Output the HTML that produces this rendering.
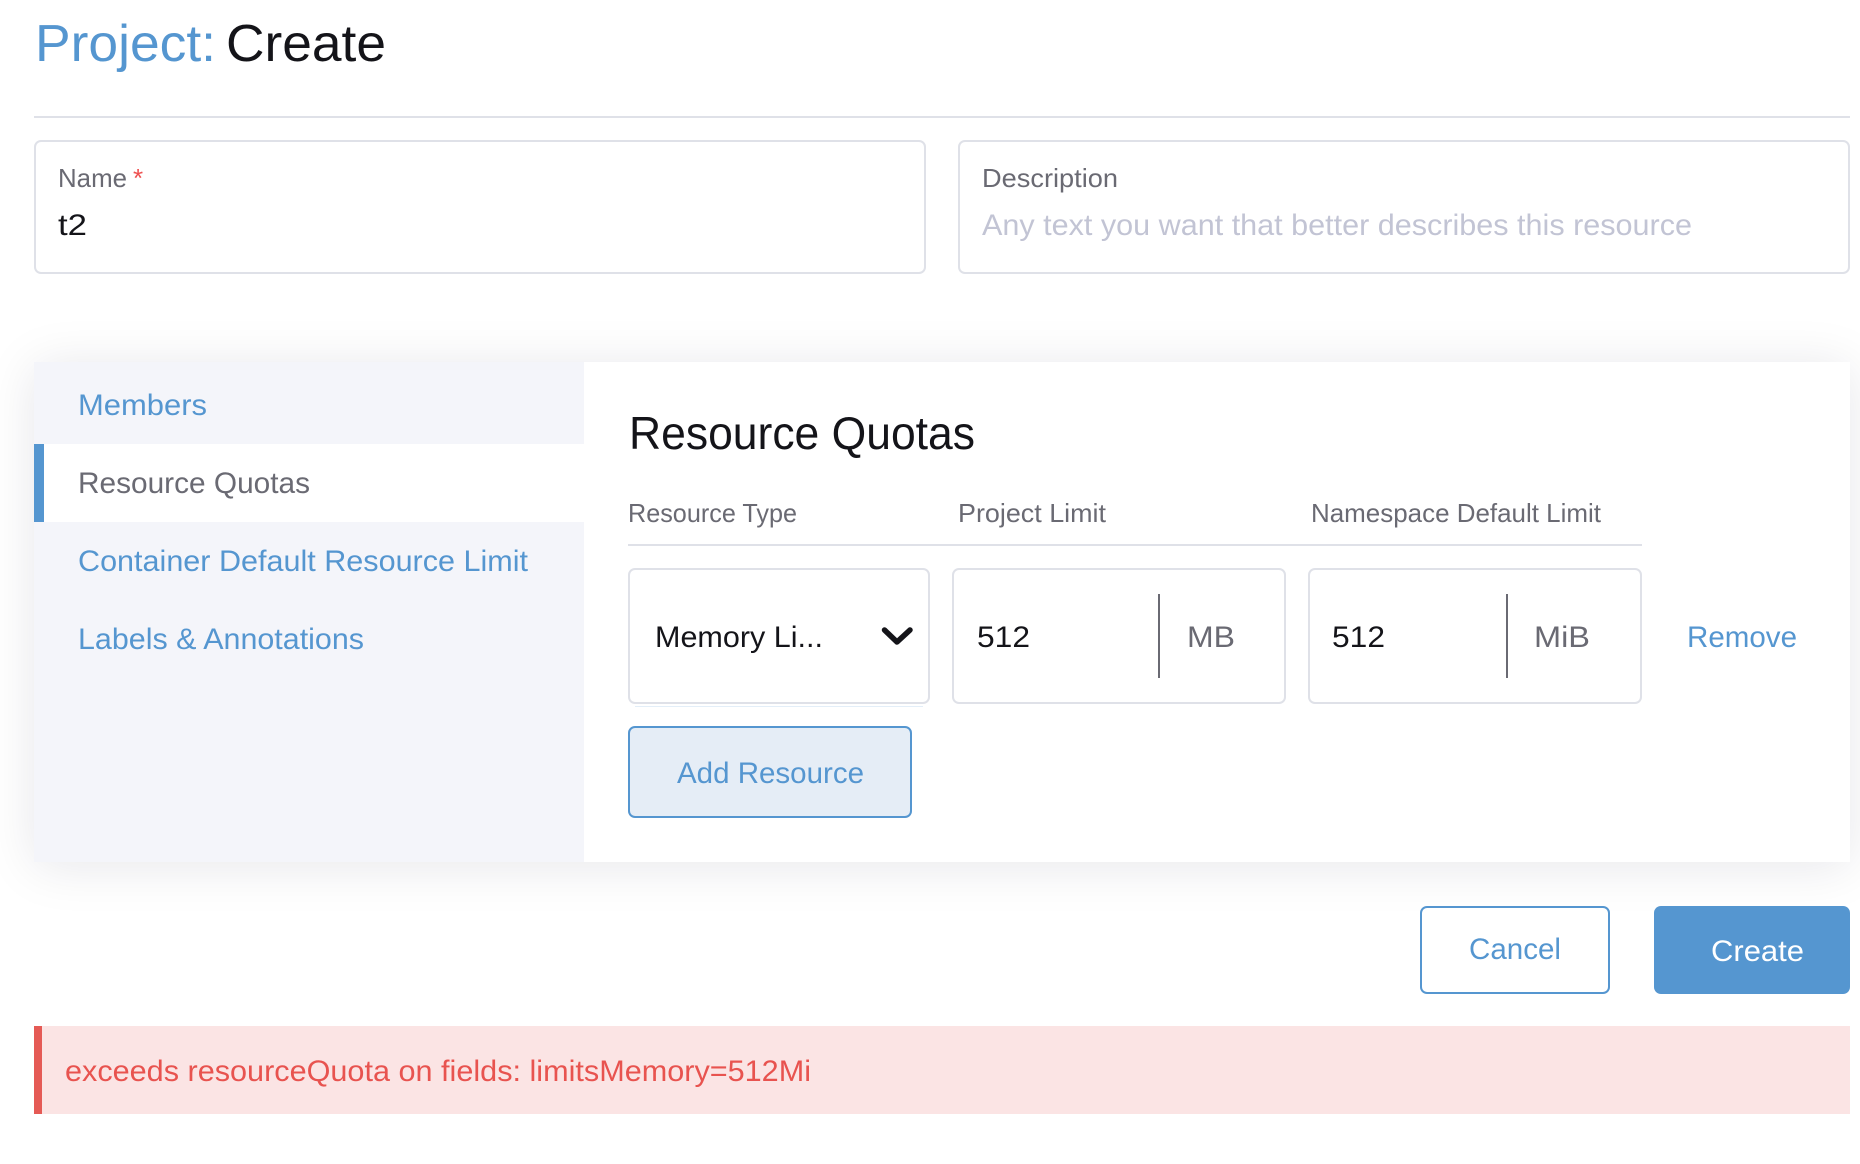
<!DOCTYPE html>
<html lang="en">
<head>
<meta charset="utf-8">
<title>Project: Create</title>
<style>
html,body{margin:0;padding:0;background:#fff;}
body{position:relative;width:1860px;height:1164px;overflow:hidden;font-family:"Liberation Sans",sans-serif;}
.b{position:absolute;box-sizing:border-box;}
.field{border:2px solid #dfe1e8;border-radius:7px;background:#fff;}
svg.t{position:absolute;left:0;top:0;width:1860px;height:1164px;}
svg.t text{font-family:"Liberation Sans",sans-serif;}
.blue{fill:#5596d0;}
.gray{fill:#6a6a73;}
.dark{fill:#141419;}
</style>
</head>
<body>
<div class="b" style="left:34px;top:116px;width:1816px;height:2px;background:#dfe1e8"></div>
<div class="b field" style="left:34px;top:140px;width:892px;height:134px"></div>
<div class="b field" style="left:958px;top:140px;width:892px;height:134px"></div>

<div class="b" style="left:34px;top:362px;width:1816px;height:500px;background:#fff;box-shadow:0 4px 48px rgba(20,20,50,.1)"></div>
<div class="b" style="left:34px;top:362px;width:550px;height:500px;background:#f4f5fa"></div>
<div class="b" style="left:34px;top:444px;width:550px;height:78px;background:#fff;border-left:10px solid #5596d0"></div>

<div class="b" style="left:628px;top:544px;width:1014px;height:2px;background:#dfe1e8"></div>
<div class="b" style="left:635px;top:706px;width:288px;height:1px;background:#e3eef8"></div>
<div class="b field" style="left:628px;top:568px;width:302px;height:136px"></div>
<div class="b field" style="left:952px;top:568px;width:334px;height:136px"></div>
<div class="b field" style="left:1308px;top:568px;width:334px;height:136px"></div>
<div class="b" style="left:1158px;top:594px;width:2px;height:84px;background:#6a6a73"></div>
<div class="b" style="left:1506px;top:594px;width:2px;height:84px;background:#6a6a73"></div>
<div class="b" style="left:628px;top:726px;width:284px;height:92px;background:#e5edf6;border:2px solid #5596d0;border-radius:7px"></div>

<div class="b" style="left:1420px;top:906px;width:190px;height:88px;background:#fff;border:2px solid #5596d0;border-radius:7px"></div>
<div class="b" style="left:1654px;top:906px;width:196px;height:88px;background:#5596d0;border-radius:7px"></div>

<div class="b" style="left:34px;top:1026px;width:1816px;height:88px;background:#fbe4e4;border-left:8px solid #e55a55"></div>

<svg class="t" viewBox="0 0 1860 1164" xmlns="http://www.w3.org/2000/svg">
  <text class="blue" x="35" y="61" font-size="52" textLength="181" lengthAdjust="spacingAndGlyphs">Project:</text>
  <text class="dark" x="226" y="61" font-size="52" textLength="160" lengthAdjust="spacingAndGlyphs">Create</text>

  <text class="gray" x="58" y="187" font-size="26" textLength="69" lengthAdjust="spacingAndGlyphs">Name</text>
  <text x="133" y="187" font-size="26" fill="#ee5050">*</text>
  <text class="dark" x="58" y="235" font-size="30" textLength="29" lengthAdjust="spacingAndGlyphs">t2</text>

  <text class="gray" x="982" y="187" font-size="26" textLength="136" lengthAdjust="spacingAndGlyphs">Description</text>
  <text x="982" y="235" font-size="30" fill="#c2c4d4" textLength="710" lengthAdjust="spacingAndGlyphs">Any text you want that better describes this resource</text>

  <text class="blue" x="78" y="415" font-size="30" textLength="129" lengthAdjust="spacingAndGlyphs">Members</text>
  <text class="gray" x="78" y="493" font-size="30" textLength="232" lengthAdjust="spacingAndGlyphs">Resource Quotas</text>
  <text class="blue" x="78" y="571" font-size="30" textLength="450" lengthAdjust="spacingAndGlyphs">Container Default Resource Limit</text>
  <text class="blue" x="78" y="649" font-size="30" textLength="286" lengthAdjust="spacingAndGlyphs">Labels &amp; Annotations</text>

  <text class="dark" x="629" y="449" font-size="46" textLength="346" lengthAdjust="spacingAndGlyphs">Resource Quotas</text>

  <text class="gray" x="628" y="522" font-size="26" textLength="169" lengthAdjust="spacingAndGlyphs">Resource Type</text>
  <text class="gray" x="958" y="522" font-size="26" textLength="148" lengthAdjust="spacingAndGlyphs">Project Limit</text>
  <text class="gray" x="1311" y="522" font-size="26" textLength="290" lengthAdjust="spacingAndGlyphs">Namespace Default Limit</text>

  <text class="dark" x="655" y="647" font-size="30" textLength="168" lengthAdjust="spacingAndGlyphs">Memory Li...</text>
  <path d="M884.5 630 L897 642 L910 630" fill="none" stroke="#141419" stroke-width="5.5" stroke-linecap="round" stroke-linejoin="round"/>

  <text class="dark" x="977" y="647" font-size="30" textLength="53" lengthAdjust="spacingAndGlyphs">512</text>
  <text class="gray" x="1187" y="647" font-size="30" textLength="48" lengthAdjust="spacingAndGlyphs">MB</text>
  <text class="dark" x="1332" y="647" font-size="30" textLength="53" lengthAdjust="spacingAndGlyphs">512</text>
  <text class="gray" x="1534" y="647" font-size="30" textLength="56" lengthAdjust="spacingAndGlyphs">MiB</text>
  <text class="blue" x="1687" y="647" font-size="30" textLength="110" lengthAdjust="spacingAndGlyphs">Remove</text>

  <text class="blue" x="677" y="783" font-size="30" textLength="187" lengthAdjust="spacingAndGlyphs">Add Resource</text>

  <text class="blue" x="1469" y="959" font-size="30" textLength="92" lengthAdjust="spacingAndGlyphs">Cancel</text>
  <text x="1711" y="961" font-size="30" fill="#fff" textLength="93" lengthAdjust="spacingAndGlyphs">Create</text>

  <text x="65" y="1081" font-size="30" fill="#e8534f" textLength="746" lengthAdjust="spacingAndGlyphs">exceeds resourceQuota on fields: limitsMemory=512Mi</text>
</svg>
</body>
</html>
